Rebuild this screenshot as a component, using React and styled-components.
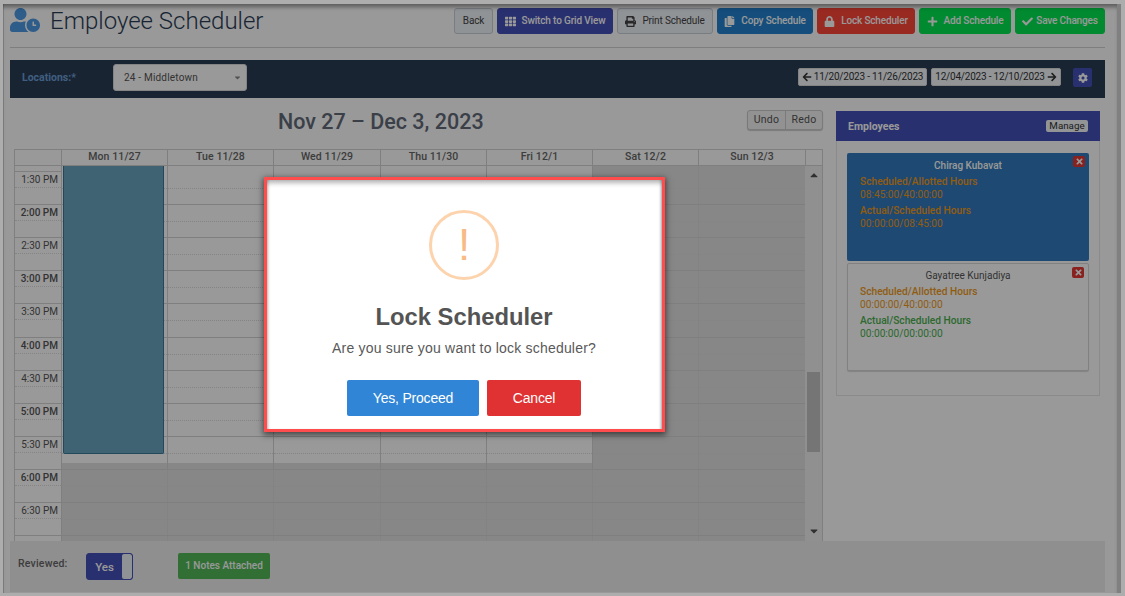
import React from 'react';
import styled, { createGlobalStyle } from 'styled-components';
import { FaUserClock, FaTh, FaPrint, FaCopy, FaLock, FaPlus, FaCheck, FaArrowLeft, FaArrowRight, FaCog, FaTimes, FaCaretDown, FaCaretUp } from 'react-icons/fa';

const GlobalStyle = createGlobalStyle`
  html, body {
    margin: 0;
    padding: 0;
    width: 1125px;
    height: 596px;
    overflow: hidden;
    font-family: Roboto, "Liberation Sans", sans-serif;
  }
  * { box-sizing: border-box; }
`;

const COLUMNS = '47px 106px 106px 107px 106px 106px 106px 107px';

const Frame = styled.div`
  width: 1125px;
  height: 596px;
  padding: 4px 4px 3px 3px;
  background: #adadad;
`;

const Screen = styled.div`
  position: relative;
  height: 100%;
  background: #fff;
  border-right: 4px solid #808080;
  padding: 0 12px 0 7px;
  overflow: hidden;
`;

const Overlay = styled.div`
  position: absolute;
  inset: 0;
  background: rgba(0, 0, 0, 0.4);
  box-shadow: inset 0 5px 4px -2px rgba(0, 0, 0, 0.4), inset 1px 0 0 rgba(0, 0, 0, 0.15);
  display: flex;
  align-items: flex-start;
  padding: 173px 0 0 261px;
`;

const Header = styled.header`
  height: 44px;
  display: flex;
  align-items: flex-start;
  border-bottom: 1px solid #d2d2d2;
`;

const TitleIcon = styled(FaUserClock)`
  width: 30px;
  height: 24px;
  color: #4d9be6;
  margin-top: 4px;
`;

const PageTitle = styled.h1`
  margin: 1px 0 0 10px;
  font-size: 24px;
  line-height: 33px;
  font-weight: 300;
  color: #2b3d55;
`;

const Toolbar = styled.div`
  margin-left: auto;
  margin-top: 4px;
  display: flex;
  gap: 4px;
`;

const ToolButton = styled.button`
  height: 26px;
  width: ${p => p.$width}px;
  padding: 0;
  border: 1px solid ${p => p.$border || p.$bg};
  border-radius: 3px;
  background: ${p => p.$bg};
  color: ${p => p.$color || '#fff'};
  font: ${p => p.$weight || 500} 10px/24px Roboto, sans-serif;
  letter-spacing: -0.15px;
  display: flex;
  align-items: center;
  justify-content: center;
  gap: ${p => p.$gap ?? 6}px;
  svg { width: 11px; height: 11px; }
`;

const NavBar = styled.div`
  margin-top: 12px;
  height: 38px;
  background: #2b3d55;
  display: flex;
  align-items: flex-start;
  position: relative;
`;

const NavLabel = styled.label`
  width: 103px;
  padding: 10px 0 0 12px;
  font-size: 10.5px;
  line-height: 16px;
  font-weight: 700;
  color: #6a9fd6;
`;

const SelectBox = styled.div`
  width: 134px;
  height: 27px;
  margin-top: 4px;
  padding: 0 4px 0 10px;
  border-radius: 3px;
  background: #fff;
  border: 1px solid #ddd;
  display: flex;
  align-items: center;
  justify-content: space-between;
  font-size: 10px;
  letter-spacing: 0.2px;
  color: #555;
  svg { width: 9px; height: 9px; color: #888; }
`;

const DateNav = styled.div`
  margin-left: auto;
  margin-top: 8px;
  margin-right: 13px;
  display: flex;
  align-items: flex-start;
`;

const DateButton = styled.button`
  width: ${p => p.$width}px;
  height: 18px;
  padding: 0;
  margin-right: ${p => p.$gap || 0}px;
  border: 1px solid #ddd;
  border-radius: 2px;
  background: #f3f7fb;
  color: #333;
  font: 400 10px/16px Roboto, sans-serif;
  letter-spacing: -0.2px;
  display: flex;
  align-items: center;
  justify-content: center;
  gap: 2px;
  svg { width: 10px; height: 10px; }
`;

const GearButton = styled.button`
  width: 19px;
  height: 19px;
  padding: 0;
  border: 0;
  border-radius: 2px;
  background: #4550b9;
  color: #fff;
  display: flex;
  align-items: center;
  justify-content: center;
  svg { width: 10px; height: 10px; }
`;

const Content = styled.div`
  display: flex;
  height: 443px;
  padding-left: 4px;
`;

const CalendarColumn = styled.section`
  width: 809px;
  display: flex;
  flex-direction: column;
`;

const CalendarTop = styled.div`
  height: 51px;
  display: flex;
  align-items: flex-start;
`;

const RangeTitle = styled.h2`
  margin: 10px 0 0 264px;
  font-size: 21.5px;
  line-height: 28px;
  font-weight: 500;
  color: #626a78;
`;

const UndoGroup = styled.div`
  margin: 12px 0 0 auto;
  height: 20px;
  display: flex;
  border: 1px solid #ccc;
  border-radius: 3px;
  background: #f4f4f4;
  box-shadow: 0 1px 1px rgba(0, 0, 0, 0.2);
`;

const UndoButton = styled.button`
  width: 37px;
  padding: 0;
  border: 0;
  border-left: ${p => (p.$divider ? '1px solid #ccc' : '0')};
  background: transparent;
  color: #555;
  font: 400 10.5px/16px Roboto, sans-serif;
  letter-spacing: 0.3px;
`;

const Calendar = styled.div`
  flex: 1;
  display: flex;
  flex-direction: column;
  border: 1px solid #d4d4d4;
  border-bottom: 0;
  min-height: 0;
`;

const HeadRow = styled.div`
  height: 15px;
  display: grid;
  grid-template-columns: ${COLUMNS} 1fr;
  border-bottom: 1px solid #d4d4d4;
  flex: none;
  box-sizing: content-box;
`;

const HeadCell = styled.div`
  border-right: 1px solid #d4d4d4;
  text-align: center;
  font-size: 10.5px;
  line-height: 13px;
  font-weight: 500;
  letter-spacing: 0.1px;
  color: #666;
  &:last-child { border-right: 0; }
`;

const CalendarBody = styled.div`
  flex: 1;
  display: flex;
  min-height: 0;
`;

const Rows = styled.div`
  position: relative;
  width: 790px;
  overflow: hidden;
`;

const SlotRow = styled.div`
  height: ${p => p.$height || 33.11}px;
  display: grid;
  grid-template-columns: ${COLUMNS};
  border-bottom: 1px solid #d4d4d4;
`;

const TimeCell = styled.div`
  border-right: 1px solid #d4d4d4;
`;

const TimeLabel = styled.div`
  height: 16px;
  border-bottom: 1px dotted #dcdcdc;
  padding-right: 3px;
  text-align: right;
  font-size: 10px;
  line-height: 16px;
  font-weight: ${p => (p.$strong ? 500 : 400)};
  color: #555;
`;

const DayCell = styled.div`
  border-right: 1px solid ${p => (p.$closed === 'all' ? '#dadada' : '#d4d4d4')};
  background: ${p => {
    if (p.$closed === 'all') return '#e2e2e2';
    if (p.$closed === 'tail') return 'linear-gradient(#fff 26px, #e2e2e2 26px)';
    return '#fff';
  }};
  &::before {
    content: '';
    display: block;
    height: 16px;
    border-bottom: 1px dotted ${p => (p.$closed === 'all' ? '#dcdcdc' : '#dcdcdc')};
  }
`;

const EventBlock = styled.div`
  position: absolute;
  top: 0;
  left: 48px;
  width: 101px;
  height: 288px;
  background: #6ca6c1;
  border: 1px solid #3a7896;
  border-top: 0;
  border-radius: 0 0 2px 2px;
`;

const ScrollTrack = styled.div`
  flex: 1;
  background: #f1f1f1;
  display: flex;
  flex-direction: column;
  align-items: center;
  color: #505050;
  svg { width: 12px; height: 12px; }
`;

const ScrollUp = styled(FaCaretUp)`
  margin-top: 3px;
`;

const ScrollDown = styled(FaCaretDown)`
  margin-top: auto;
  margin-bottom: 4px;
`;

const ScrollThumb = styled.div`
  width: 13px;
  height: 80px;
  margin-top: 191px;
  background: #c4c4c4;
`;

const Panel = styled.aside`
  width: 264px;
  height: 285px;
  margin: 13px 0 0 13px;
  border: 1px solid #e6e6e6;
`;

const PanelHead = styled.div`
  height: 30px;
  margin: -1px -1px 0;
  padding: 0 12px;
  background: #4550b9;
  display: flex;
  align-items: center;
  justify-content: space-between;
  font-size: 10.5px;
  font-weight: 700;
  color: #fff;
`;

const ManageButton = styled.button`
  height: 12px;
  width: 42px;
  padding: 0;
  border: 0;
  border-radius: 2px;
  background: #f3f7fb;
  color: #333;
  font: 400 9.8px/12px Roboto, sans-serif;
`;

const CardList = styled.div`
  padding: 12px 10px 0;
  display: flex;
  flex-direction: column;
  gap: 2px;
`;

const Card = styled.div`
  position: relative;
  height: ${p => p.$height}px;
  padding: ${p => (p.$active ? '6px 13px 0' : '5px 12px 0')};
  border-radius: 2px;
  background: ${p => (p.$active ? '#317bbe' : '#fff')};
  border: ${p => (p.$active ? '0' : '1px solid #d8d8d8')};
  box-shadow: ${p => (p.$active ? 'none' : '0 1px 1px rgba(0,0,0,.15)')};
`;

const CardName = styled.div`
  text-align: center;
  font-size: 10px;
  line-height: 13px;
  margin-bottom: 3px;
  font-weight: ${p => (p.$active ? 500 : 400)};
  color: ${p => (p.$active ? '#fff' : '#555')};
`;

const RemoveButton = styled.button`
  position: absolute;
  top: 3px;
  right: 4px;
  width: 12px;
  height: 11px;
  padding: 0;
  border: 0;
  border-radius: 2px;
  background: #e53935;
  color: #fff;
  display: flex;
  align-items: center;
  justify-content: center;
  svg { width: 9px; height: 9px; }
`;

const HoursBlock = styled.div`
  margin-bottom: 3px;
  color: ${p => p.$color};
  font-size: 10.2px;
  line-height: 13px;
`;

const HoursLabel = styled.div`
  font-weight: 500;
`;

const BottomBar = styled.footer`
  height: 51px;
  background: #eee;
  display: flex;
  align-items: flex-start;
  padding-left: 8px;
`;

const ReviewedLabel = styled.span`
  width: 68px;
  margin-top: 16px;
  font-size: 10.5px;
  line-height: 14px;
  font-weight: 500;
  letter-spacing: 0.2px;
  color: #666;
`;

const Toggle = styled.div`
  width: 47px;
  height: 27px;
  margin-top: 12px;
  border: 1px solid #4550b9;
  border-radius: 3px;
  background: #4550b9;
  display: flex;
  overflow: hidden;
`;

const ToggleOn = styled.span`
  flex: 1;
  text-align: center;
  color: #fff;
  font-size: 11.5px;
  line-height: 26px;
  font-weight: 500;
`;

const ToggleKnob = styled.span`
  width: 10px;
  background: #f0f5fa;
  border-radius: 2px;
`;

const NotesButton = styled.button`
  width: 92px;
  height: 26px;
  margin: 12px 0 0 45px;
  padding: 0;
  border: 0;
  border-radius: 2px;
  background: #52ba58;
  color: #fff;
  font: 500 10px/24px Roboto, sans-serif;
`;

const Modal = styled.div`
  width: 401px;
  height: 255px;
  border: 3px solid #ff4c4c;
  background: #fff;
  box-shadow: 0 2px 6px 1px rgba(0, 0, 0, 0.55), inset 0 5px 5px -2px rgba(0, 0, 0, 0.3), inset 3px 0 3px -2px rgba(0, 0, 0, 0.25), inset -3px 0 3px -2px rgba(0, 0, 0, 0.35);
  display: flex;
  flex-direction: column;
  align-items: center;
  padding: 30px 1px 0 0;
  font-family: "Liberation Sans", Arial, sans-serif;
`;

const AlertCircle = styled.div`
  width: 70px;
  height: 70px;
  border: 3px solid #fdd3ad;
  border-radius: 50%;
  display: flex;
  align-items: center;
  justify-content: center;
  color: #f8bb86;
  font: 400 44px/1 "Liberation Sans", sans-serif;
`;

const ModalTitle = styled.h3`
  margin: 22px 0 0;
  font-size: 23.8px;
  line-height: 30px;
  font-weight: 700;
  color: #545454;
`;

const ModalText = styled.p`
  margin: 7px 0 0;
  font-size: 14px;
  line-height: 18px;
  letter-spacing: 0.2px;
  color: #595959;
`;

const ModalActions = styled.div`
  margin-top: 23px;
  display: flex;
  gap: 8px;
`;

const ModalButton = styled.button`
  width: ${p => p.$width}px;
  height: 36px;
  padding: 0;
  border: 0;
  border-radius: 2px;
  background: ${p => p.$bg};
  color: #fff;
  font: 400 14px/36px "Liberation Sans", Arial, sans-serif;
  letter-spacing: -0.2px;
`;

const days = ['Mon 11/27', 'Tue 11/28', 'Wed 11/29', 'Thu 11/30', 'Fri 12/1', 'Sat 12/2', 'Sun 12/3'];

const slots = [
  { time: '1:30 PM' },
  { time: '2:00 PM', strong: true },
  { time: '2:30 PM' },
  { time: '3:00 PM', strong: true },
  { time: '3:30 PM' },
  { time: '4:00 PM', strong: true },
  { time: '4:30 PM' },
  { time: '5:00 PM', strong: true },
  { time: '5:30 PM', tail: true },
  { time: '6:00 PM', strong: true, evening: true },
  { time: '6:30 PM', evening: true },
  { time: '', evening: true },
];

const closedState = (slot, dayIndex) => {
  if (dayIndex >= 5 || slot.evening) return 'all';
  if (slot.tail) return 'tail';
  return null;
};

const employees = [
  {
    name: 'Chirag Kubavat', active: true, height: 108,
    allotted: '08:45:00/40:00:00', actual: '00:00:00/08:45:00', actualColor: '#f09a1c',
  },
  {
    name: 'Gayatree Kunjadiya', height: 108,
    allotted: '00:00:00/40:00:00', actual: '00:00:00/00:00:00', actualColor: '#4caf50',
  },
];

export default function App() {
  return (
    <Frame>
      <GlobalStyle />
      <Screen>
        <Header>
          <TitleIcon />
          <PageTitle>Employee Scheduler</PageTitle>
          <Toolbar>
            <ToolButton $width={39} $bg="#f0f5fa" $border="#c8d0d8" $color="#444" $weight={400}>Back</ToolButton>
            <ToolButton $width={116} $bg="#4550b9"><FaTh />Switch to Grid View</ToolButton>
            <ToolButton $width={96} $bg="#f0f5fa" $border="#c8d0d8" $color="#444" $weight={400}><FaPrint />Print Schedule</ToolButton>
            <ToolButton $width={96} $bg="#2383cf"><FaCopy />Copy Schedule</ToolButton>
            <ToolButton $width={98} $bg="#ff4639"><FaLock />Lock Scheduler</ToolButton>
            <ToolButton $width={92} $bg="#04e650"><FaPlus />Add Schedule</ToolButton>
            <ToolButton $width={90} $bg="#04e650" $gap={3}><FaCheck />Save Changes</ToolButton>
          </Toolbar>
        </Header>

        <NavBar>
          <NavLabel>Locations:*</NavLabel>
          <SelectBox>24 - Middletown<FaCaretDown /></SelectBox>
          <DateNav>
            <DateButton $width={129} $gap={4}><FaArrowLeft />11/20/2023 - 11/26/2023</DateButton>
            <DateButton $width={130} $gap={12}>12/04/2023 - 12/10/2023<FaArrowRight /></DateButton>
            <GearButton><FaCog /></GearButton>
          </DateNav>
        </NavBar>

        <Content>
          <CalendarColumn>
            <CalendarTop>
              <RangeTitle>Nov 27 – Dec 3, 2023</RangeTitle>
              <UndoGroup>
                <UndoButton>Undo</UndoButton>
                <UndoButton $divider>Redo</UndoButton>
              </UndoGroup>
            </CalendarTop>
            <Calendar>
              <HeadRow>
                <HeadCell />
                {days.map(day => <HeadCell key={day}>{day}</HeadCell>)}
                <HeadCell />
              </HeadRow>
              <CalendarBody>
                <Rows>
                  <SlotRow $height={6}>
                    <TimeCell />
                    {days.map((day, i) => <DayCell key={day} $closed={i >= 5 ? 'all' : null} />)}
                  </SlotRow>
                  {slots.map((slot, n) => (
                    <SlotRow key={n}>
                      <TimeCell><TimeLabel $strong={slot.strong}>{slot.time}</TimeLabel></TimeCell>
                      {days.map((day, i) => <DayCell key={day} $closed={closedState(slot, i)} />)}
                    </SlotRow>
                  ))}
                  <EventBlock />
                </Rows>
                <ScrollTrack>
                  <ScrollUp />
                  <ScrollThumb />
                  <ScrollDown />
                </ScrollTrack>
              </CalendarBody>
            </Calendar>
          </CalendarColumn>

          <Panel>
            <PanelHead>
              Employees
              <ManageButton>Manage</ManageButton>
            </PanelHead>
            <CardList>
              {employees.map(emp => (
                <Card key={emp.name} $active={emp.active} $height={emp.height}>
                  <CardName $active={emp.active}>{emp.name}</CardName>
                  <RemoveButton><FaTimes /></RemoveButton>
                  <HoursBlock $color="#f09a1c">
                    <HoursLabel>Scheduled/Allotted Hours</HoursLabel>
                    {emp.allotted}
                  </HoursBlock>
                  <HoursBlock $color={emp.actualColor}>
                    <HoursLabel>Actual/Scheduled Hours</HoursLabel>
                    {emp.actual}
                  </HoursBlock>
                </Card>
              ))}
            </CardList>
          </Panel>
        </Content>

        <BottomBar>
          <ReviewedLabel>Reviewed:</ReviewedLabel>
          <Toggle>
            <ToggleOn>Yes</ToggleOn>
            <ToggleKnob />
          </Toggle>
          <NotesButton>1 Notes Attached</NotesButton>
        </BottomBar>

        <Overlay>
          <Modal>
            <AlertCircle>!</AlertCircle>
            <ModalTitle>Lock Scheduler</ModalTitle>
            <ModalText>Are you sure you want to lock scheduler?</ModalText>
            <ModalActions>
              <ModalButton $width={132} $bg="#3085d6">Yes, Proceed</ModalButton>
              <ModalButton $width={94} $bg="#e03232">Cancel</ModalButton>
            </ModalActions>
          </Modal>
        </Overlay>
      </Screen>
    </Frame>
  );
}
